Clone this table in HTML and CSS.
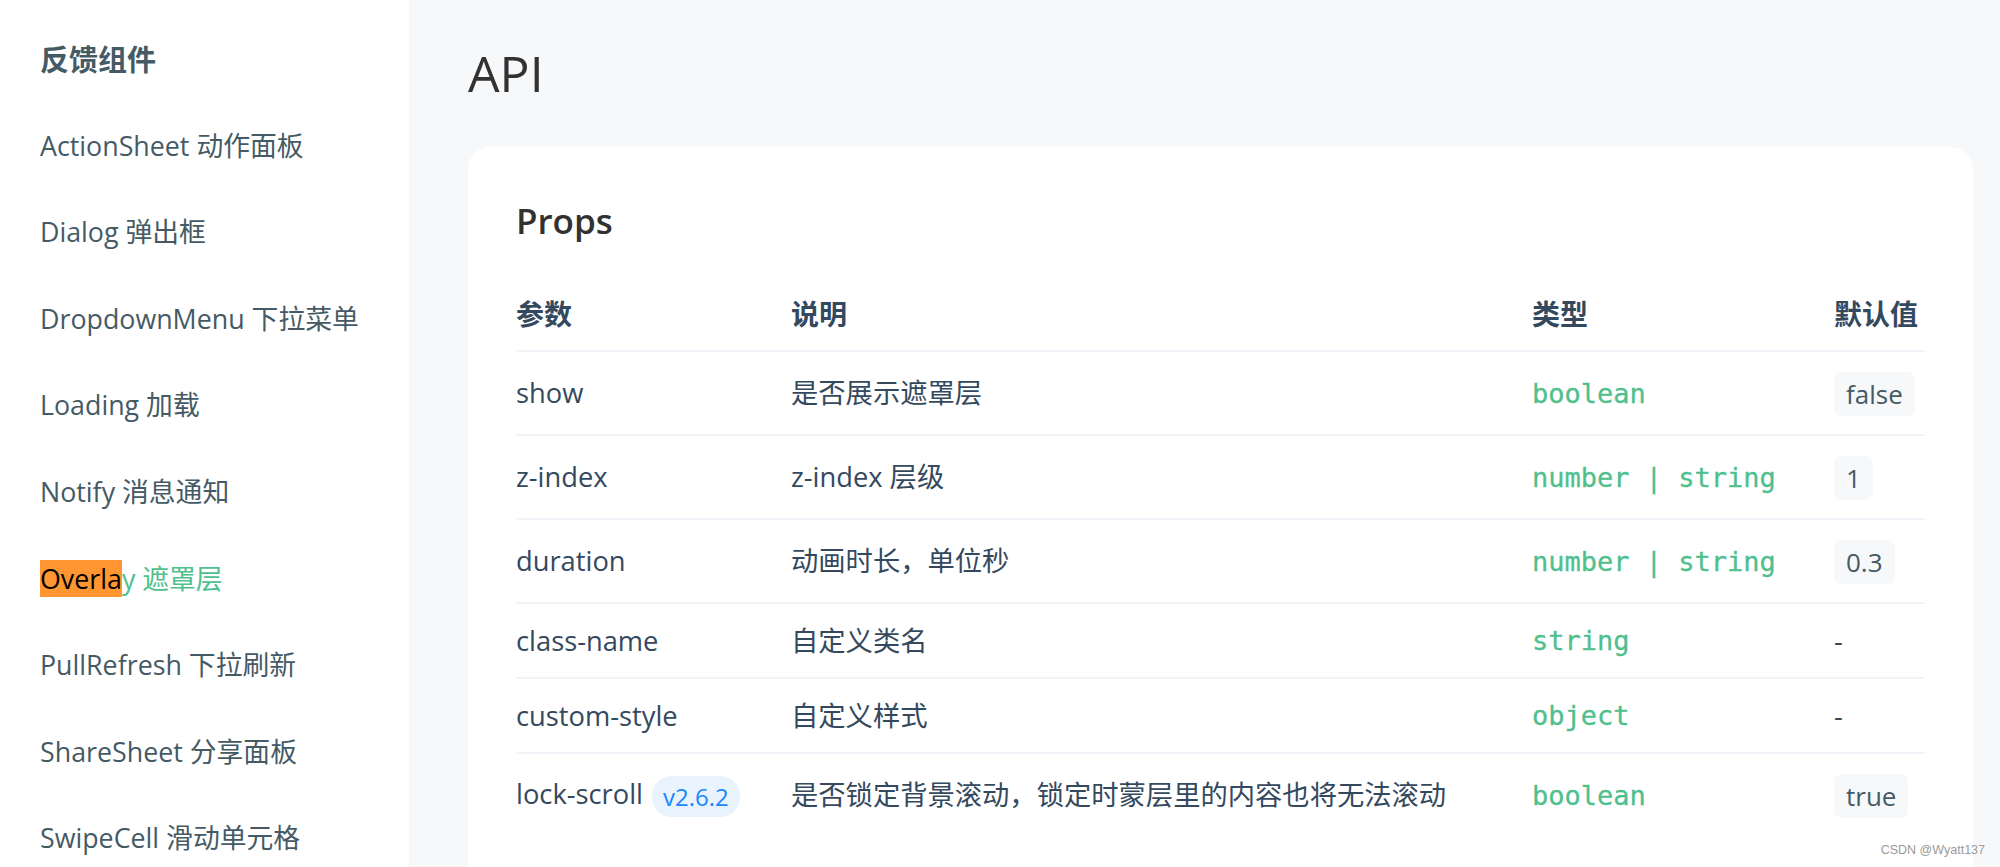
FILE: index.html
```html
<!DOCTYPE html>
<html lang="zh-CN">
<head>
<meta charset="utf-8">
<title>Overlay 遮罩层</title>
<link rel="stylesheet" href="styles.css">
</head>
<body>
<div class="layout">
  <nav class="sidebar">
    <div class="nav-title">反馈组件</div>
    <ul class="nav-list">
      <li class="nav-item">ActionSheet 动作面板</li>
      <li class="nav-item">Dialog 弹出框</li>
      <li class="nav-item">DropdownMenu 下拉菜单</li>
      <li class="nav-item">Loading 加载</li>
      <li class="nav-item">Notify 消息通知</li>
      <li class="nav-item nav-item--active"><mark class="find-hit">Overla</mark>y 遮罩层</li>
      <li class="nav-item">PullRefresh 下拉刷新</li>
      <li class="nav-item">ShareSheet 分享面板</li>
      <li class="nav-item">SwipeCell 滑动单元格</li>
    </ul>
  </nav>
  <main class="content">
    <h2 class="page-title">API</h2>
    <section class="card">
      <h3 class="card-title">Props</h3>
      <div class="props">
        <div class="props-row props-head">
          <div class="cell">参数</div>
          <div class="cell">说明</div>
          <div class="cell">类型</div>
          <div class="cell">默认值</div>
        </div>
        <div class="props-row props-row--code">
          <div class="cell">show</div>
          <div class="cell">是否展示遮罩层</div>
          <div class="cell"><em class="type">boolean</em></div>
          <div class="cell"><code class="val">false</code></div>
        </div>
        <div class="props-row props-row--code">
          <div class="cell">z-index</div>
          <div class="cell">z-index 层级</div>
          <div class="cell"><em class="type">number | string</em></div>
          <div class="cell"><code class="val">1</code></div>
        </div>
        <div class="props-row props-row--code">
          <div class="cell">duration</div>
          <div class="cell">动画时长，单位秒</div>
          <div class="cell"><em class="type">number | string</em></div>
          <div class="cell"><code class="val">0.3</code></div>
        </div>
        <div class="props-row">
          <div class="cell">class-name</div>
          <div class="cell">自定义类名</div>
          <div class="cell"><em class="type">string</em></div>
          <div class="cell">-</div>
        </div>
        <div class="props-row">
          <div class="cell">custom-style</div>
          <div class="cell">自定义样式</div>
          <div class="cell"><em class="type">object</em></div>
          <div class="cell">-</div>
        </div>
        <div class="props-row props-row--code">
          <div class="cell">lock-scroll<span class="version">v2.6.2</span></div>
          <div class="cell">是否锁定背景滚动，锁定时蒙层里的内容也将无法滚动</div>
          <div class="cell"><em class="type">boolean</em></div>
          <div class="cell"><code class="val">true</code></div>
        </div>
      </div>
    </section>
  </main>
</div>
<div class="watermark">CSDN @Wyatt137</div>
</body>
</html>
```
FILE: styles.css
```css
* {
  box-sizing: border-box;
}

html, body {
  margin: 0;
  padding: 0;
  height: 867px;
  overflow: hidden;
}

body {
  font-family: "Open Sans", "Noto Sans CJK SC", sans-serif;
  background: #f7f8fa;
  color: #34495e;
  position: relative;
}

.layout {
  display: flex;
  height: 867px;
}

/* Sidebar */
.sidebar {
  width: 409px;
  flex: none;
  background: #fff;
  padding-top: 30px;
}

.nav-title {
  padding-left: 40px;
  font-size: 29px;
  line-height: 60px;
  font-weight: 700;
  color: #455a64;
}

.nav-list {
  list-style: none;
  margin: 0;
  padding: 12.7px 0 0;
}

.nav-item {
  padding-left: 40px;
  font-size: 26.8px;
  line-height: 86.6px;
  color: #455a64;
  white-space: nowrap;
}

.nav-item--active {
  color: #4fc08d;
}

.find-hit {
  background: #ff9632;
  color: #000;
}

/* Content */
.content {
  flex: 1;
  min-width: 0;
  padding: 39px 27px 0 59px;
}

.page-title {
  margin: 0;
  font-size: 50px;
  line-height: 68px;
  font-weight: 400;
  color: #323233;
}

.card {
  margin-top: 40px;
  background: #fff;
  border-radius: 22px;
  padding: 48px;
  min-height: 760px;
}

.card-title {
  margin: 0;
  font-size: 35px;
  line-height: 52px;
  font-weight: 600;
  color: #323233;
}

.props {
  margin-top: 30px;
  font-size: 27.3px;
}

.props-row {
  display: grid;
  grid-template-columns: 259px 741px 302px 1fr;
  align-items: center;
  height: 75px;
  border-top: 2px solid #f1f4f8;
  line-height: 42px;
}

.props-row--code {
  height: 84px;
}

.props-head {
  height: 73px;
  border-top: 0;
  font-size: 28px;
  font-weight: 600;
  color: #34495e;
}

.cell {
  padding-left: 16px;
  white-space: nowrap;
}

.cell:first-child {
  padding-left: 0;
}

.type {
  font-family: "DejaVu Sans Mono", monospace;
  font-style: normal;
  font-size: 27px;
  color: #4fc08d;
  white-space: pre;
  -webkit-text-stroke: 0.3px #4fc08d;
}

.val {
  display: inline-block;
  vertical-align: middle;
  padding: 4px 12px;
  font-family: "Open Sans", sans-serif;
  font-size: 26px;
  line-height: 36px;
  color: #455a64;
  background: #f7f8fa;
  border-radius: 8px;
}

.version {
  display: inline-block;
  vertical-align: middle;
  margin-left: 9px;
  padding: 4px 11px;
  font-size: 24px;
  line-height: 33px;
  color: #1989fa;
  background: #e8f3fe;
  border-radius: 20px;
}

.watermark {
  position: absolute;
  right: 15px;
  bottom: 10px;
  font-family: "Liberation Sans", Arial, sans-serif;
  font-size: 12.5px;
  color: #9a9a9a;
  text-shadow: 0 0 2px #fff;
}
```
